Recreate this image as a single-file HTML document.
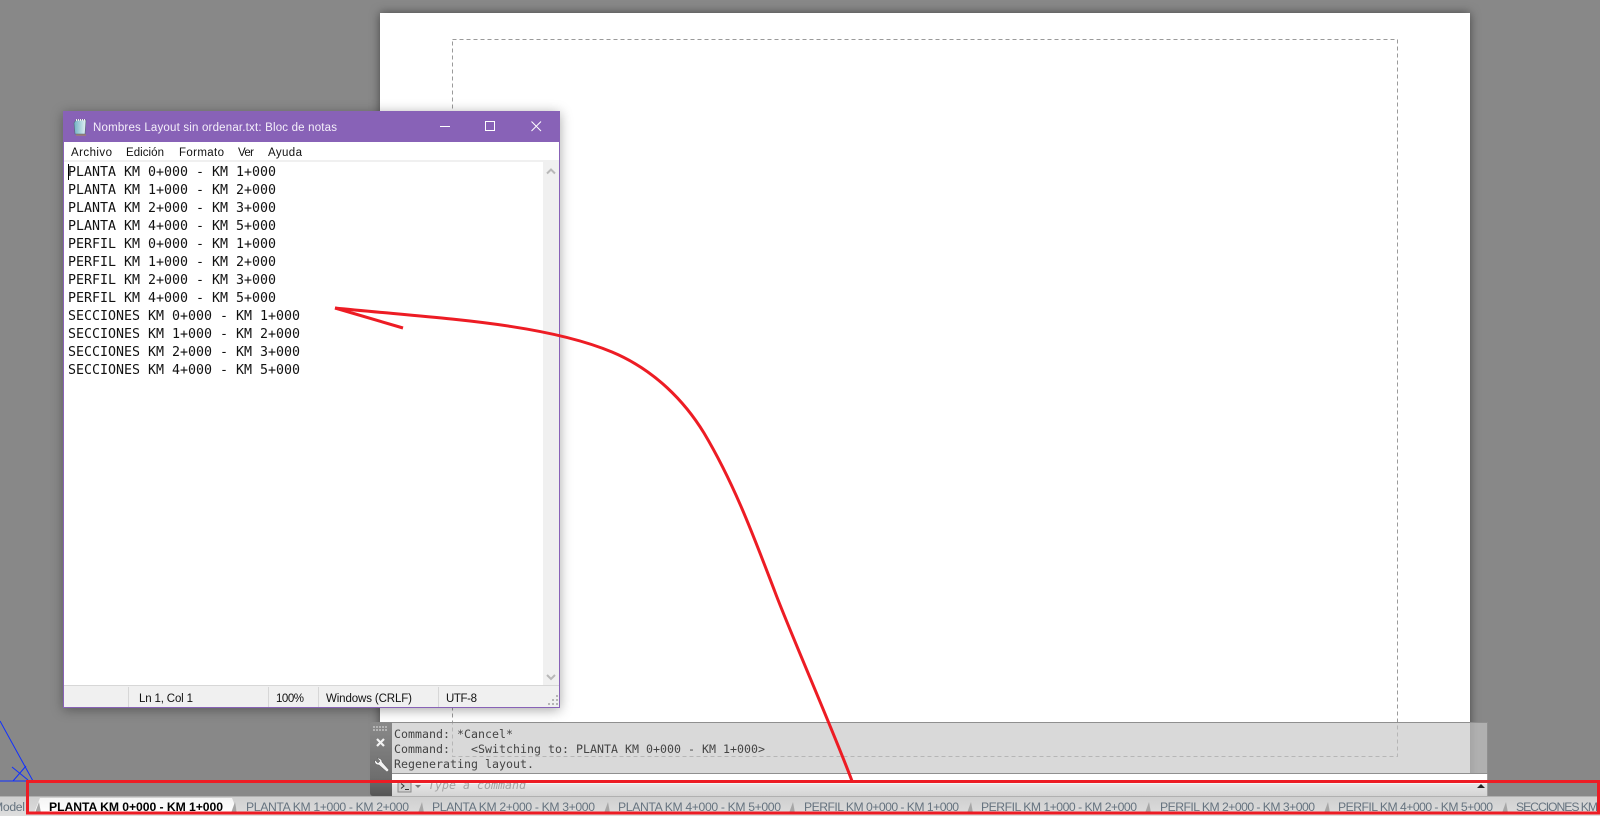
<!DOCTYPE html>
<html><head><meta charset="utf-8"><title>Layout</title>
<style>html,body{margin:0;padding:0;width:1600px;height:816px;overflow:hidden;background:#888}svg{display:block}
.ui{font-family:"Liberation Sans",sans-serif;font-size:11.500px;fill:#111}
.mono{font-family:"DejaVu Sans Mono","Liberation Mono",monospace}
.nt{font-size:13.3px;fill:#111}
.cmd{font-size:11.6px;fill:#444}
.tab{font-family:"Liberation Sans",sans-serif;font-size:12.200px;fill:#66737f}
</style></head><body>
<svg width="1600" height="816" viewBox="0 0 1600 816" xmlns="http://www.w3.org/2000/svg">
<defs>
<filter id="s1" x="-5%" y="-5%" width="110%" height="110%"><feDropShadow dx="0" dy="0" stdDeviation="5" flood-color="#000" flood-opacity=".5"/></filter>
<filter id="s2" x="-8%" y="-8%" width="116%" height="116%"><feDropShadow dx="0" dy="2" stdDeviation="6" flood-color="#000" flood-opacity=".35"/></filter>
<linearGradient id="grip" x1="0" y1="0" x2="0" y2="1"><stop offset="0" stop-color="#8a8a8a"/><stop offset=".75" stop-color="#6e6e6e"/><stop offset="1" stop-color="#555"/></linearGradient>
<linearGradient id="inp" x1="0" y1="0" x2="0" y2="1"><stop offset="0" stop-color="#fff"/><stop offset=".42" stop-color="#fff"/><stop offset=".45" stop-color="#e6e6e6"/><stop offset="1" stop-color="#d4d4d4"/></linearGradient>
<linearGradient id="tabs" x1="0" y1="0" x2="0" y2="1"><stop offset="0" stop-color="#cfcfcf"/><stop offset="1" stop-color="#dedede"/></linearGradient>
<linearGradient id="act" x1="0" y1="0" x2="0" y2="1"><stop offset="0" stop-color="#f4f4f4"/><stop offset="1" stop-color="#fff"/></linearGradient>
<linearGradient id="ic" x1="0" y1="0" x2="1" y2="0"><stop offset="0" stop-color="#6fb0c4"/><stop offset="1" stop-color="#e4f2f4"/></linearGradient>
</defs>
<rect width="1600" height="816" fill="#888"/>
<!-- blue UCS -->
<g stroke="#1030ff" stroke-width="1" fill="none"><path d="M0 721L33 781M0 781H27M12 767L28 780M13 781L26 766"/></g>
<!-- paper -->
<rect x="380" y="13" width="1090" height="790" fill="#fff" filter="url(#s1)"/>
<rect x="452.500" y="39.500" width="945" height="717" fill="none" stroke="#9a9a9a" stroke-dasharray="4 3"/>
<!-- command window -->
<rect x="392" y="722" width="1096" height="51" fill="#c5c5c5" opacity=".66"/>
<path d="M392 722.500H1488M1487.500 722V796M392 773.500H1488" stroke="#8f8f8f" fill="none"/>
<rect x="392" y="774" width="1096" height="22" fill="url(#inp)"/>
<path d="M1487.500 774V796M392 796.500H1488" stroke="#a0a0a0"/>
<path d="M370 725a3 3 0 0 1 3-3H392V796H373a3 3 0 0 1-3-3Z" fill="url(#grip)"/>
<g fill="#b4b4b4"><rect x="373" y="726" width="2" height="2"/><rect x="376" y="726" width="2" height="2"/><rect x="379" y="726" width="2" height="2"/><rect x="382" y="726" width="2" height="2"/><rect x="385" y="726" width="2" height="2"/><rect x="373" y="729" width="2" height="2"/><rect x="376" y="729" width="2" height="2"/><rect x="379" y="729" width="2" height="2"/><rect x="382" y="729" width="2" height="2"/><rect x="385" y="729" width="2" height="2"/></g>
<path d="M377 739L384 746M384 739L377 746" stroke="#f2f2f2" stroke-width="2.200" fill="none"/>
<path d="M375 760L378 763L380 761L377 758C379 758 382 759 382 762L389 770L387 772L379 765C376 765 374 763 375 760Z" fill="#f2f2f2" stroke="#555" stroke-width=".5"/>
<text class="mono cmd" x="394" y="738" textLength="119">Command: *Cancel*</text>
<text class="mono cmd" x="394" y="753" xml:space="preserve" textLength="371">Command:   &lt;Switching to: PLANTA KM 0+000 - KM 1+000&gt;</text>
<text class="mono cmd" x="394" y="768" textLength="140">Regenerating layout.</text>
<rect x="398" y="781" width="13" height="11" fill="#d0d0d0" stroke="#8a8a8a"/>
<path d="M401 783.500L404 786L401 788.500M405 789.500H409" stroke="#333" fill="none"/>
<path d="M415 785H421L418 788Z" fill="#777"/>
<text class="mono" x="428" y="789" font-size="11.600" font-style="italic" fill="#a2a2a2" textLength="98">Type a command</text>
<path d="M1477 788L1481 784L1485 788Z" fill="#222"/>
<!-- tab bar -->
<rect x="0" y="797" width="1600" height="19" fill="url(#tabs)"/>
<rect x="0" y="796" width="1600" height="1" fill="#b0b0b0"/>
<path d="M34 813L40 798H232L238 813Z" fill="url(#act)"/>
<text class="tab" x="-7" y="811" fill="#777" textLength="32">Model</text>
<g fill="#a6a6a6"><path d="M35 813L39 802L41 813Z"/><path d="M231 813L235 802L237 813Z"/><path d="M418 813L422 802L424 813Z"/><path d="M604 813L608 802L610 813Z"/><path d="M789 813L793 802L795 813Z"/><path d="M967 813L971 802L973 813Z"/><path d="M1145 813L1149 802L1151 813Z"/><path d="M1324 813L1328 802L1330 813Z"/><path d="M1502 813L1506 802L1508 813Z"/></g>
<text x="49" y="811" font-family="Liberation Sans,sans-serif" font-size="12.200" font-weight="700" fill="#000" textLength="174">PLANTA KM 0+000 - KM 1+000</text>
<text class="tab" x="246" y="811" textLength="163">PLANTA KM 1+000 - KM 2+000</text>
<text class="tab" x="432" y="811" textLength="163">PLANTA KM 2+000 - KM 3+000</text>
<text class="tab" x="618" y="811" textLength="163">PLANTA KM 4+000 - KM 5+000</text>
<text class="tab" x="804" y="811" textLength="155">PERFIL KM 0+000 - KM 1+000</text>
<text class="tab" x="981" y="811" textLength="156">PERFIL KM 1+000 - KM 2+000</text>
<text class="tab" x="1160" y="811" textLength="155">PERFIL KM 2+000 - KM 3+000</text>
<text class="tab" x="1338" y="811" textLength="155">PERFIL KM 4+000 - KM 5+000</text>
<text class="tab" x="1516" y="811" textLength="82">SECCIONES KM</text>
<!-- notepad -->
<g filter="url(#s2)"><rect x="63.500" y="111.500" width="496" height="596" fill="#fff" stroke="#8862b7"/></g>
<rect x="63" y="111" width="497" height="31" fill="#8862b7"/>
<path d="M74 123L76 120H86L85 134H75Z" fill="url(#ic)" stroke="#567" stroke-width=".6"/>
<path d="M76 135H86" stroke="#a88c50"/>
<path d="M76 120H86" stroke="#eee" stroke-dasharray="1 1" stroke-width="2"/>
<text class="ui" x="93" y="131" style="fill:#f4effa" textLength="244">Nombres Layout sin ordenar.txt: Bloc de notas</text>
<path d="M440 126.500H450" stroke="#fff" fill="none"/>
<rect x="485.500" y="121.500" width="9" height="9" fill="none" stroke="#fff"/>
<path d="M531.500 121.500L541 131M541 121.500L531.500 131" stroke="#fff" fill="none"/>
<rect x="64" y="142" width="495" height="18" fill="#fff"/>
<rect x="64" y="160" width="495" height="2" fill="#f0f0f0"/>
<text class="ui" x="71" y="156" textLength="41">Archivo</text>
<text class="ui" x="126" y="156" textLength="38">Edición</text>
<text class="ui" x="179" y="156" textLength="45">Formato</text>
<text class="ui" x="238" y="156" textLength="16">Ver</text>
<text class="ui" x="268" y="156" textLength="34">Ayuda</text>
<rect x="543" y="162" width="16" height="523" fill="#f0f0f0"/>
<path d="M547 173.500L551 169.500L555 173.500" stroke="#b8b8b8" stroke-width="2" fill="none"/>
<path d="M547 675L551 679L555 675" stroke="#b8b8b8" stroke-width="2" fill="none"/>
<path d="M68.500 164V180" stroke="#000"/>
<g class="mono nt">
<text x="68" y="176" textLength="208">PLANTA KM 0+000 - KM 1+000</text>
<text x="68" y="194" textLength="208">PLANTA KM 1+000 - KM 2+000</text>
<text x="68" y="212" textLength="208">PLANTA KM 2+000 - KM 3+000</text>
<text x="68" y="230" textLength="208">PLANTA KM 4+000 - KM 5+000</text>
<text x="68" y="248" textLength="208">PERFIL KM 0+000 - KM 1+000</text>
<text x="68" y="266" textLength="208">PERFIL KM 1+000 - KM 2+000</text>
<text x="68" y="284" textLength="208">PERFIL KM 2+000 - KM 3+000</text>
<text x="68" y="302" textLength="208">PERFIL KM 4+000 - KM 5+000</text>
<text x="68" y="320" textLength="232">SECCIONES KM 0+000 - KM 1+000</text>
<text x="68" y="338" textLength="232">SECCIONES KM 1+000 - KM 2+000</text>
<text x="68" y="356" textLength="232">SECCIONES KM 2+000 - KM 3+000</text>
<text x="68" y="374" textLength="232">SECCIONES KM 4+000 - KM 5+000</text>
</g>
<rect x="64" y="685" width="495" height="22" fill="#f0f0f0"/>
<path d="M64 685.500H559" stroke="#d7d7d7"/>
<path d="M128.500 687V707M268.500 687V707M318.500 687V707M438.500 687V707" stroke="#d7d7d7"/>
<text class="ui" x="139" y="702" textLength="54">Ln 1, Col 1</text>
<text class="ui" x="276" y="702" textLength="28">100%</text>
<text class="ui" x="326" y="702" textLength="86">Windows (CRLF)</text>
<text class="ui" x="446" y="702" textLength="31">UTF-8</text>
<g fill="#b5b5b5"><rect x="556" y="703" width="2" height="2"/><rect x="552" y="703" width="2" height="2"/><rect x="548" y="703" width="2" height="2"/><rect x="556" y="699" width="2" height="2"/><rect x="552" y="699" width="2" height="2"/><rect x="556" y="695" width="2" height="2"/></g>
<!-- red annotations (drawn over everything) -->
<rect x="27.500" y="781.500" width="1571" height="31.500" fill="none" stroke="#ed1c24" stroke-width="3"/>
<path d="M335 308C430 318 540 322 612 352C655 370 685 402 704 433C735 485 755 540 775 592C790 632 835 735 852 781" fill="none" stroke="#ed1c24" stroke-width="3"/>
<path d="M335 308L403 328" fill="none" stroke="#ed1c24" stroke-width="3"/>
</svg>
</body></html>
